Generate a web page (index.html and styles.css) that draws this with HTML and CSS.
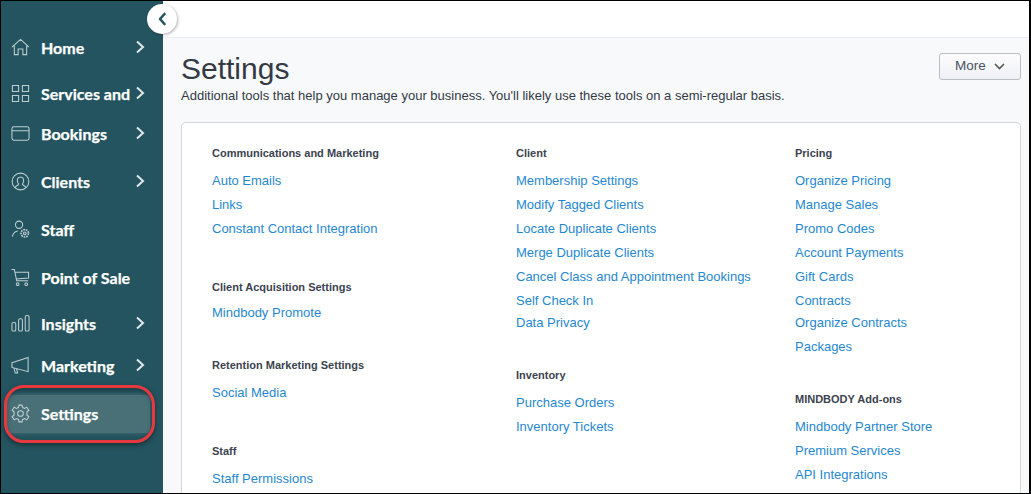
FILE: index.html
```html
<!DOCTYPE html>
<html lang="en">
<head>
<meta charset="utf-8">
<title>Settings</title>
<link rel="stylesheet" href="styles.css">
</head>
<body>
<div class="frame">
  <aside class="sidebar">
    <button class="collapse" aria-label="Collapse">
      <svg width="10" height="14" viewBox="0 0 10 14"><path d="M7.5 2 L3 7 L7.5 12" fill="none" stroke="#24545f" stroke-width="2.6" stroke-linecap="round" stroke-linejoin="round"/></svg>
    </button>
    <nav class="nav">
      <a class="item">
        <svg class="ico" viewBox="0 0 20 20"><path d="M1 9.5 L10 1.5 L19 9.5 M3.5 8 V17.5 H7.5 V11.5 H12.5 V17.5 H16.5 V8"/></svg>
        <span class="label">Home</span>
        <svg class="chev" viewBox="0 0 10 14"><path d="M2 1.5 L8 7 L2 12.5"/></svg>
      </a>
      <a class="item gap-22">
        <svg class="ico" viewBox="0 0 20 20"><path d="M1.5 1.5H8V8H1.5Z M12 1.5H18.5V8H12Z M1.5 12H8V18.5H1.5Z M12 12H18.5V18.5H12Z"/></svg>
        <span class="label">Services and</span>
        <svg class="chev" viewBox="0 0 10 14"><path d="M2 1.5 L8 7 L2 12.5"/></svg>
      </a>
      <a class="item gap-16">
        <svg class="ico" viewBox="0 0 20 20"><path d="M3 3H17Q19 3 19 5V15Q19 17 17 17H3Q1 17 1 15V5Q1 3 3 3Z M1 7H19"/></svg>
        <span class="label">Bookings</span>
        <svg class="chev" viewBox="0 0 10 14"><path d="M2 1.5 L8 7 L2 12.5"/></svg>
      </a>
      <a class="item">
        <svg class="ico" viewBox="0 0 20 20"><circle cx="10" cy="10" r="8.8"/><path d="M4.5 16.5 C5 14 8 14.5 8 12.5 C6.5 11 6.5 9 6.8 7.5 C7.5 4.5 12.5 4.5 13.2 7.5 C13.5 9 13.5 11 12 12.5 C12 14.5 15 14 15.5 16.5"/></svg>
        <span class="label">Clients</span>
        <svg class="chev" viewBox="0 0 10 14"><path d="M2 1.5 L8 7 L2 12.5"/></svg>
      </a>
      <a class="item">
        <svg class="ico" viewBox="0 0 20 20"><circle cx="8.5" cy="5" r="3.8"/><path d="M1.5 17.5 C2 13 5 12 7 11.5 M10.5 9 V8.8"/><circle cx="14.5" cy="14" r="1.4"/><circle cx="14.5" cy="14" r="3.9" stroke-dasharray="1.8 0.9" stroke-width="1.7"/></svg>
        <span class="label">Staff</span>
      </a>
      <a class="item">
        <svg class="ico" viewBox="0 0 20 20"><path d="M0.5 1.5 H3.5 L6 13.5 H18 M4.2 4.5 H18.5 V10.5 L5.4 11.5"/><circle cx="7" cy="17" r="1.4"/><circle cx="16" cy="17" r="1.4"/></svg>
        <span class="label">Point of Sale</span>
      </a>
      <a class="item gap-22">
        <svg class="ico" viewBox="0 0 20 20"><rect x="1" y="9" width="4" height="9" rx="1.5"/><rect x="8" y="5" width="4" height="13" rx="1.5"/><rect x="15" y="1.5" width="4" height="16.5" rx="1.5"/></svg>
        <span class="label">Insights</span>
        <svg class="chev" viewBox="0 0 10 14"><path d="M2 1.5 L8 7 L2 12.5"/></svg>
      </a>
      <a class="item gap-18">
        <svg class="ico" viewBox="0 0 20 20"><path d="M1 7 L18 1.5 V16.5 L1 12 Z M3 12.5 L4.5 18 H7 L5.8 13.3 M18 5 V13"/></svg>
        <span class="label">Marketing</span>
        <svg class="chev" viewBox="0 0 10 14"><path d="M2 1.5 L8 7 L2 12.5"/></svg>
      </a>
      <a class="item active">
        <svg class="ico" viewBox="0 0 20 20"><circle cx="10" cy="10" r="3"/><path d="M8.4 1.2 H11.6 L12.2 3.7 L14.4 4.6 L16.6 3.3 L18.8 6.6 L16.8 8.2 V11.8 L18.8 13.4 L16.6 16.7 L14.4 15.4 L12.2 16.3 L11.6 18.8 H8.4 L7.8 16.3 L5.6 15.4 L3.4 16.7 L1.2 13.4 L3.2 11.8 V8.2 L1.2 6.6 L3.4 3.3 L5.6 4.6 L7.8 3.7 Z"/></svg>
        <span class="label">Settings</span>
      </a>
    </nav>
  </aside>
  <div class="content">
    <div class="topbar"></div>
    <main class="main">
      <header class="head">
        <div>
          <h1 class="title">Settings</h1>
          <p class="sub">Additional tools that help you manage your business. You'll likely use these tools on a semi-regular basis.</p>
        </div>
        <button class="more">More
          <svg width="11" height="7" viewBox="0 0 11 7"><path d="M1 1 L5.5 5.5 L10 1" fill="none" stroke="#555" stroke-width="1.6"/></svg>
        </button>
      </header>
      <section class="card">
        <div class="col col-a">
          <h2 class="h">Communications and Marketing</h2>
          <a class="l">Auto Emails</a>
          <a class="l">Links</a>
          <a class="l">Constant Contact Integration</a>
          <h2 class="h after-wide">Client Acquisition Settings</h2>
          <a class="l near">Mindbody Promote</a>
          <h2 class="h">Retention Marketing Settings</h2>
          <a class="l">Social Media</a>
          <h2 class="h after-wide">Staff</h2>
          <a class="l">Staff Permissions</a>
        </div>
        <div class="col col-b">
          <h2 class="h">Client</h2>
          <a class="l">Membership Settings</a>
          <a class="l">Modify Tagged Clients</a>
          <a class="l">Locate Duplicate Clients</a>
          <a class="l">Merge Duplicate Clients</a>
          <a class="l">Cancel Class and Appointment Bookings</a>
          <a class="l">Self Check In</a>
          <a class="l tight">Data Privacy</a>
          <h2 class="h">Inventory</h2>
          <a class="l">Purchase Orders</a>
          <a class="l">Inventory Tickets</a>
        </div>
        <div class="col col-c">
          <h2 class="h">Pricing</h2>
          <a class="l">Organize Pricing</a>
          <a class="l">Manage Sales</a>
          <a class="l">Promo Codes</a>
          <a class="l">Account Payments</a>
          <a class="l">Gift Cards</a>
          <a class="l">Contracts</a>
          <a class="l tight">Organize Contracts</a>
          <a class="l">Packages</a>
          <h2 class="h">MINDBODY Add-ons</h2>
          <a class="l">Mindbody Partner Store</a>
          <a class="l">Premium Services</a>
          <a class="l">API Integrations</a>
        </div>
      </section>
    </main>
  </div>
</div>
</body>
</html>
```
FILE: styles.css
```css
*, *::before, *::after { box-sizing: border-box; }
html, body { margin: 0; padding: 0; background: #000; }
.frame {
  width: 1031px; height: 494px;
  border-top: 1px solid #000; border-left: 1px solid #000;
  border-right: 2px solid #000; border-bottom: 1px solid #000;
  display: flex; overflow: hidden; background: #fff;
}
.sidebar {
  position: relative; flex: 0 0 162px; background: #24545f;
  z-index: 2;
}
.collapse {
  position: absolute; left: 146px; top: 3px;
  width: 30px; height: 30px; border-radius: 50%;
  border: 0; padding: 0; background: #fff;
  box-shadow: 1px 1px 3px rgba(0,0,0,.3);
  display: flex; align-items: center; justify-content: center;
}
.nav { padding-top: 35px; display: flex; flex-direction: column; }
.item {
  position: relative; height: 24px; margin-top: 24px;
  display: flex; align-items: center; color: #fff;
}
.item:first-child { margin-top: 0; }
.gap-22 { margin-top: 22px; }
.gap-16 { margin-top: 16px; }
.gap-18 { margin-top: 18px; }
.ico {
  position: absolute; left: 10px; top: 2px; width: 19px; height: 19px;
  fill: none; stroke: #bfd0d3; stroke-width: 1.1;
}
.label {
  margin-left: 40px;
  font: 700 16px/24px Lato, "Liberation Sans", sans-serif;
  -webkit-text-stroke: 0.25px #fff;
  color: #fff; white-space: nowrap;
}
.chev {
  position: absolute; left: 134px; top: 4px; width: 10px; height: 14px;
  fill: none; stroke: #dfe8ea; stroke-width: 2;
}
.active::before {
  content: ""; position: absolute; left: 6px; width: 143px; top: -7px; bottom: -7px;
  background: #4a7077; border-radius: 4px; box-shadow: 0 0 4px #4a7077;
}
.active::after {
  content: ""; position: absolute; left: 3px; width: 151px; top: -17px; bottom: -17px;
  border: 3px solid #e8383f; border-radius: 20px;
  box-shadow: 0 2px 5px rgba(0,0,0,.45), inset 0 2px 4px rgba(0,0,0,.3);
}
.active .label { z-index: 1; position: relative; }
.active .ico { z-index: 1; }
.content { flex: 1; min-width: 0; display: flex; flex-direction: column; }
.topbar { height: 37px; flex: none; background: #fff; border-bottom: 1px solid #ecedf0; }
.main { flex: 1; background: #f8f9fb; padding: 15px 8px 0 18px; overflow: hidden; }
.head { display: flex; justify-content: space-between; align-items: flex-start; height: 69px; }
.title {
  margin: 0; font: 400 30px/32px "Liberation Sans", Arial, sans-serif; color: #333a44;
}
.sub {
  margin: 3px 0 0; font: 400 13px/16px "Liberation Sans", Arial, sans-serif; color: #333a44;
}
.more {
  width: 82px; height: 27px;
  border: 1px solid #b9bdc4; border-radius: 3px;
  background: linear-gradient(#fdfdfe, #eef0f4);
  font: 400 13.5px/1 "Liberation Sans", Arial, sans-serif; color: #4a5462;
  display: flex; align-items: center; justify-content: center; gap: 8px; padding: 0 0 2px 0;
}
.more svg { margin-top: 2px; }
.card {
  display: flex; height: 400px; background: #fff;
  border: 1px solid #d5d6da; border-radius: 5px;
  padding: 23px 0 0 30px;
}
.col { display: flex; flex-direction: column; align-items: flex-start; }
.col-a { width: 304px; }
.col-b { width: 279px; }
.h {
  margin: 37px 0 0; height: 14px;
  font: 700 11px/14px "Liberation Sans", Arial, sans-serif; color: #3c4350;
  white-space: nowrap;
}
.h:first-child { margin-top: 0; }
.h.after-wide { margin-top: 43px; }
.l {
  margin-top: 8px; height: 16px;
  font: 400 13px/16px "Liberation Sans", Arial, sans-serif; color: #1f88d0;
  white-space: nowrap;
}
.h + .l { margin-top: 13px; }
.h + .l.near { margin-top: 11px; }
.tight { margin-top: 6px; }
```
